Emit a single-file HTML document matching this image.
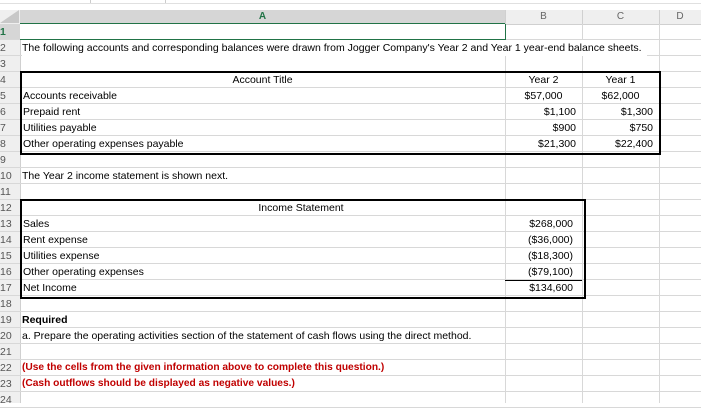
<!DOCTYPE html>
<html><head><style>
body{margin:0;width:701px;height:403px;overflow:hidden;background:#fff;font-family:"Liberation Sans",sans-serif;font-size:10.5px;color:#000;position:relative}
.a{position:absolute;white-space:nowrap}
.gl{position:absolute;background:#d8d8d8}
.rn{position:absolute;left:0px;width:18px;font-size:10.5px;color:#555;line-height:16px}
.t{position:absolute;line-height:16px;white-space:nowrap;font-size:10.5px}
.r{text-align:right}
.c{text-align:center}
</style></head><body>
<div class="a" style="left:0;top:0;width:701px;height:3px;background:#fff;border-bottom:1px solid #e0e0e0"></div>
<div class="a" style="left:90px;top:0;width:1px;height:3px;background:#ccc"></div>
<div class="a" style="left:165px;top:0;width:1px;height:3px;background:#ccc"></div>
<div class="a" style="left:0;top:10px;width:701px;height:14px;background:#efefef;border-bottom:1px solid #d0d0d0"></div>
<div class="a" style="left:20px;top:10px;width:485px;height:13px;background:#d6d6d6;border-bottom:2px solid #217346"></div>
<div class="a" style="left:0;top:10px;width:0;height:0;border-left:19px solid transparent;border-bottom:13px solid #c8c8c8"></div>
<div class="a c" style="left:20px;top:10px;width:485px;line-height:14px;color:#217346;font-weight:bold;font-size:10px">A</div>
<div class="a c" style="left:505px;top:10px;width:77px;line-height:14px;color:#666;font-size:10px">B</div>
<div class="a c" style="left:582px;top:10px;width:77px;line-height:14px;color:#666;font-size:10px">C</div>
<div class="a c" style="left:659px;top:10px;width:42px;line-height:14px;color:#666;font-size:10px">D</div>
<div class="a" style="left:505px;top:10px;width:1px;height:14px;background:#d0d0d0"></div>
<div class="a" style="left:582px;top:10px;width:1px;height:14px;background:#d0d0d0"></div>
<div class="a" style="left:659px;top:10px;width:1px;height:14px;background:#d0d0d0"></div>
<div class="a" style="left:0;top:24px;width:20px;height:379px;background:#efefef;border-right:1px solid #d0d0d0"></div>
<div class="a" style="left:0;top:24px;width:20px;height:16px;background:#d6d6d6"></div>
<div id="g"></div>
<script>
var s='';
for(var i=1;i<=24;i++){var y=24+16*i;s+='<div class="gl" style="left:0;top:'+(y-1)+'px;width:701px;height:1px"></div>';
s+='<div class="rn" style="top:'+(24+16*(i-1))+'px;'+(i==1?'color:#217346;font-weight:bold':'')+'">'+i+'</div>';}
[505,582,659].forEach(function(x){s+='<div class="gl" style="left:'+x+'px;top:24px;width:1px;height:379px"></div>';});
document.getElementById('g').innerHTML=s;
</script>
<div class="a" style="left:20px;top:24px;width:485px;height:15px;border-right:1px solid #217346;border-bottom:1px solid #217346;background:#fff"></div>
<div class="t" style="left:22px;top:40px;width:625px;background:#fff;">The following accounts and corresponding balances were drawn from Jogger Company's Year 2 and Year 1 year-end balance sheets.</div>
<div class="a" style="left:20px;top:71px;width:637px;height:80px;border:2px solid #000"></div>
<div class="t c" style="left:20px;top:72px;width:485px">Account Title</div>
<div class="t c" style="left:505px;top:72px;width:77px">Year 2</div>
<div class="t c" style="left:582px;top:72px;width:77px">Year 1</div>
<div class="t" style="left:23px;top:88px">Accounts receivable</div>
<div class="t" style="left:23px;top:104px">Prepaid rent</div>
<div class="t" style="left:23px;top:120px">Utilities payable</div>
<div class="t" style="left:23px;top:136px">Other operating expenses payable</div>
<div class="t c" style="left:505px;top:88px;width:77px">$57,000</div>
<div class="t r" style="left:505px;top:104px;width:71px">$1,100</div>
<div class="t r" style="left:505px;top:120px;width:71px">$900</div>
<div class="t r" style="left:505px;top:136px;width:71px">$21,300</div>
<div class="t c" style="left:582px;top:88px;width:77px">$62,000</div>
<div class="t r" style="left:582px;top:104px;width:71px">$1,300</div>
<div class="t r" style="left:582px;top:120px;width:71px">$750</div>
<div class="t r" style="left:582px;top:136px;width:71px">$22,400</div>
<div class="t" style="left:22px;top:168px">The Year 2 income statement is shown next.</div>
<div class="a" style="left:20px;top:199px;width:562px;height:96px;border:2px solid #000"></div>
<div class="a" style="left:505px;top:280px;width:77px;height:1px;background:#000"></div>
<div class="a" style="left:505px;top:297px;width:77px;height:1px;background:#000"></div>
<div class="t c" style="left:20px;top:200px;width:562px">Income Statement</div>
<div class="t" style="left:23px;top:216px">Sales</div>
<div class="t" style="left:23px;top:232px">Rent expense</div>
<div class="t" style="left:23px;top:248px">Utilities expense</div>
<div class="t" style="left:23px;top:264px">Other operating expenses</div>
<div class="t" style="left:23px;top:280px">Net Income</div>
<div class="t r" style="left:505px;top:216px;width:68px">$268,000</div>
<div class="t r" style="left:505px;top:232px;width:68px">($36,000)</div>
<div class="t r" style="left:505px;top:248px;width:68px">($18,300)</div>
<div class="t r" style="left:505px;top:264px;width:68px">($79,100)</div>
<div class="t r" style="left:505px;top:280px;width:68px">$134,600</div>
<div class="t" style="left:22px;top:312px;font-weight:bold">Required</div>
<div class="t" style="left:22px;top:328px">a. Prepare the operating activities section of the statement of cash flows using the direct method.</div>
<div class="t" style="left:22px;top:360px;font-weight:bold;color:#c00000;font-size:10.2px">(Use the cells from the given information above to complete this question.)</div>
<div class="t" style="left:22px;top:376px;font-weight:bold;color:#c00000;font-size:10.2px">(Cash outflows should be displayed as negative values.)</div>
</body></html>
